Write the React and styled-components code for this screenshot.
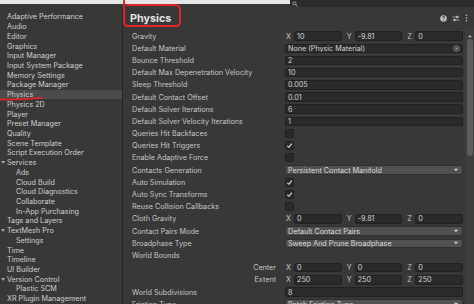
import React from "react";
import styled, { createGlobalStyle } from "styled-components";

const GlobalStyle = createGlobalStyle`
  html, body {
    margin: 0;
    padding: 0;
    background: #383838;
  }
  body {
    font-family: Inter, "Liberation Sans", sans-serif;
  }
`;

const SIDE_ITEMS = [
  { name: "Adaptive Performance" },
  { name: "Audio" },
  { name: "Editor" },
  { name: "Graphics" },
  { name: "Input Manager" },
  { name: "Input System Package" },
  { name: "Memory Settings" },
  { name: "Package Manager" },
  { name: "Physics", selected: true },
  { name: "Physics 2D" },
  { name: "Player" },
  { name: "Preset Manager" },
  { name: "Quality" },
  { name: "Scene Template" },
  { name: "Script Execution Order" },
  { name: "Services", open: true },
  { name: "Ads", depth: 1 },
  { name: "Cloud Build", depth: 1 },
  { name: "Cloud Diagnostics", depth: 1 },
  { name: "Collaborate", depth: 1 },
  { name: "In-App Purchasing", depth: 1 },
  { name: "Tags and Layers" },
  { name: "TextMesh Pro", open: true },
  { name: "Settings", depth: 1 },
  { name: "Time" },
  { name: "Timeline" },
  { name: "UI Builder" },
  { name: "Version Control", open: true },
  { name: "Plastic SCM", depth: 1 },
  { name: "XR Plugin Management" },
];

const PROPS = [
  { label: "Gravity", type: "vec", values: ["10", "-9.81", "0"] },
  { label: "Default Material", type: "object", value: "None (Physic Material)" },
  { label: "Bounce Threshold", type: "field", value: "2" },
  { label: "Default Max Depenetration Velocity", type: "field", value: "10" },
  { label: "Sleep Threshold", type: "field", value: "0.005" },
  { label: "Default Contact Offset", type: "field", value: "0.01" },
  { label: "Default Solver Iterations", type: "field", value: "6" },
  { label: "Default Solver Velocity Iterations", type: "field", value: "1" },
  { label: "Queries Hit Backfaces", type: "check", checked: false },
  { label: "Queries Hit Triggers", type: "check", checked: true },
  { label: "Enable Adaptive Force", type: "check", checked: false },
  { label: "Contacts Generation", type: "select", value: "Persistent Contact Manifold" },
  { label: "Auto Simulation", type: "check", checked: true },
  { label: "Auto Sync Transforms", type: "check", checked: true },
  { label: "Reuse Collision Callbacks", type: "check", checked: false },
  { label: "Cloth Gravity", type: "vec", values: ["0", "-9.81", "0"] },
  { label: "Contact Pairs Mode", type: "select", value: "Default Contact Pairs" },
  { label: "Broadphase Type", type: "select", value: "Sweep And Prune Broadphase" },
  { label: "World Bounds", type: "none" },
  { label: "Center", type: "vec", values: ["0", "0", "0"], sub: true },
  { label: "Extent", type: "vec", values: ["250", "250", "250"], sub: true },
  { label: "World Subdivisions", type: "field", value: "8" },
  { label: "Friction Type", type: "select", value: "Patch Friction Type" },
];

const App = () => {
  return (
    <>
      <GlobalStyle />
      <Window>
        <TopBar>
          <LightStrip />
          <SearchBox>
            <svg width="6" height="6" viewBox="0 0 6 6">
              <circle cx="2.4" cy="2.4" r="1.6" fill="none" stroke="#bdbdbd" strokeWidth="0.8" />
              <path d="M3.6 3.6 L5.4 5.4" stroke="#bdbdbd" strokeWidth="0.9" />
            </svg>
          </SearchBox>
        </TopBar>
        <Body>
          <Sidebar>
            {SIDE_ITEMS.map((item) => (
              <SideItem key={item.name} $depth={item.depth || 0} $selected={item.selected} $hasArrow={item.open}>
                {item.open && <Fold>▼</Fold>}
                {item.name}
              </SideItem>
            ))}
          </Sidebar>
          <Main>
            <Header>
              <Title>Physics</Title>
              <HeaderIcons>
                <svg width="7" height="7" viewBox="0 0 7 7">
                  <circle cx="3.5" cy="3.5" r="3.2" fill="#c8c8c8" />
                  <text x="3.5" y="5.5" fontSize="5.5" fontWeight="700" textAnchor="middle" fill="#383838" fontFamily="Inter, sans-serif">?</text>
                </svg>
                <svg width="8" height="7" viewBox="0 0 8 7">
                  <path d="M0.5 2 H7.5 M0.5 5 H7.5" stroke="#b8b8b8" strokeWidth="0.8" />
                  <rect x="4.3" y="0.8" width="1.6" height="2.4" fill="#c8c8c8" />
                  <rect x="1.8" y="3.8" width="1.6" height="2.4" fill="#c8c8c8" />
                </svg>
                <svg width="3" height="8" viewBox="0 0 3 8">
                  <circle cx="1.5" cy="1.2" r="0.8" fill="#c8c8c8" />
                  <circle cx="1.5" cy="4" r="0.8" fill="#c8c8c8" />
                  <circle cx="1.5" cy="6.8" r="0.8" fill="#c8c8c8" />
                </svg>
              </HeaderIcons>
            </Header>
            <Content>
              <Rows>
                {PROPS.map((p) => (
                  <Row key={p.label}>
                    <Label $sub={p.sub}>{p.label}</Label>
                    <Value>
                      <PropValue prop={p} />
                    </Value>
                  </Row>
                ))}
              </Rows>
              <Scrollbar>
                <svg width="6" height="4" viewBox="0 0 6 4">
                  <path d="M1 3.2 L3 1 L5 3.2 Z" fill="#bdbdbd" />
                </svg>
                <Thumb />
              </Scrollbar>
            </Content>
          </Main>
        </Body>
        <Marks width="474" height="304" viewBox="0 0 474 304">
          <path
            d="M124 0 L124 22 Q124 26 128 26 L176 26 Q180 26 180 22 L180 10 Q180 5 175 5 L127 5"
            fill="none"
            stroke="#e1232a"
            strokeWidth="2"
            strokeLinecap="round"
          />
          <path d="M0 99.5 Q20 99.8 42 97.8" fill="none" stroke="#e1232a" strokeWidth="1.8" strokeLinecap="round" />
        </Marks>
      </Window>
    </>
  );
};

const PropValue = ({ prop }) => {
  if (prop.type === "vec") {
    return (
      <VecWrap>
        {["X", "Y", "Z"].map((axis, i) => (
          <VecGroup key={axis}>
            <Axis>{axis}</Axis>
            <Field>{prop.values[i]}</Field>
          </VecGroup>
        ))}
      </VecWrap>
    );
  }
  if (prop.type === "object") {
    return (
      <Field>
        <span>{prop.value}</span>
        <svg width="7" height="7" viewBox="0 0 7 7">
          <circle cx="3.5" cy="3.5" r="2.8" fill="none" stroke="#9a9a9a" strokeWidth="0.8" />
          <circle cx="3.5" cy="3.5" r="1.2" fill="#9a9a9a" />
        </svg>
      </Field>
    );
  }
  if (prop.type === "field") return <Field>{prop.value}</Field>;
  if (prop.type === "check") {
    return (
      <Check>
        {prop.checked && (
          <svg width="7" height="7" viewBox="0 0 7 7">
            <path d="M1.3 3.8 L2.9 5.3 L5.8 1.6" fill="none" stroke="#e6e6e6" strokeWidth="1.1" />
          </svg>
        )}
      </Check>
    );
  }
  if (prop.type === "select") {
    return (
      <Select>
        <span>{prop.value}</span>
        <svg width="6" height="4" viewBox="0 0 6 4">
          <path d="M0.8 0.8 L5.2 0.8 L3 3.3 Z" fill="#d0d0d0" />
        </svg>
      </Select>
    );
  }
  return null;
};

const Window = styled.div`
  position: relative;
  width: 474px;
  height: 304px;
  overflow: hidden;
  display: flex;
  flex-direction: column;
  background: #383838;
`;

const TopBar = styled.div`
  display: flex;
  height: 8px;
  flex-shrink: 0;
`;

const LightStrip = styled.div`
  flex: 1;
  height: 4px;
  background: #e6e6e6;
`;

const SearchBox = styled.div`
  width: 184px;
  height: 7px;
  background: #2b2b2b;
  border-bottom-left-radius: 2px;
  display: flex;
  align-items: center;
  padding-left: 2px;
  box-sizing: border-box;
`;

const Body = styled.div`
  flex: 1;
  display: flex;
  min-height: 0;
`;

const Sidebar = styled.div`
  width: 122px;
  flex-shrink: 0;
  border-right: 1px solid #242424;
  padding-top: 4px;
  background: #383838;
`;

const SideItem = styled.div`
  display: flex;
  align-items: center;
  height: 9.72px;
  padding-left: ${(p) => (p.$depth ? 16 : p.$hasArrow ? 1 : 7)}px;
  font-size: 7.2px;
  color: #cfcfcf;
  white-space: nowrap;
  background: ${(p) => (p.$selected ? "#4b4b4b" : "transparent")};
`;

const Fold = styled.span`
  width: 6px;
  font-size: 4px;
  color: #a8a8a8;
`;

const Main = styled.div`
  flex: 1;
  display: flex;
  flex-direction: column;
  min-width: 0;
`;

const Header = styled.div`
  height: 20px;
  flex-shrink: 0;
  display: flex;
  align-items: center;
  justify-content: space-between;
  padding: 0 6px 0 7px;
`;

const Title = styled.div`
  font-size: 10.8px;
  font-weight: 700;
  color: #e2e2e2;
`;

const HeaderIcons = styled.div`
  display: flex;
  align-items: center;
  gap: 5px;
`;

const Content = styled.div`
  flex: 1;
  display: flex;
  min-height: 0;
`;

const Rows = styled.div`
  flex: 1;
  padding-top: 2px;
`;

const Row = styled.div`
  display: flex;
  align-items: center;
  height: 12.2px;
  padding-left: 9px;
`;

const Label = styled.div`
  flex: 0 0 153px;
  font-size: 7.2px;
  color: #c6c6c6;
  white-space: nowrap;
  text-align: ${(p) => (p.$sub ? "right" : "left")};
  padding-right: ${(p) => (p.$sub ? 9 : 0)}px;
  box-sizing: border-box;
`;

const Value = styled.div`
  width: 178px;
  display: flex;
  align-items: center;
`;

const VecWrap = styled.div`
  flex: 1;
  display: flex;
  gap: 4px;
`;

const VecGroup = styled.div`
  flex: 1;
  display: flex;
  align-items: center;
`;

const Axis = styled.span`
  width: 8px;
  padding-left: 1px;
  font-size: 7.2px;
  color: #c6c6c6;
`;

const Field = styled.div`
  flex: 1;
  height: 9.5px;
  box-sizing: border-box;
  display: flex;
  align-items: center;
  justify-content: space-between;
  padding: 0 2px 0 2px;
  background: #2a2a2a;
  border: 1px solid #212121;
  border-radius: 2px;
  font-size: 7.2px;
  color: #d4d4d4;
  white-space: nowrap;
  overflow: hidden;
`;

const Check = styled.div`
  width: 9px;
  height: 9px;
  box-sizing: border-box;
  background: #2a2a2a;
  border: 1px solid #202020;
  border-radius: 2px;
  display: flex;
  align-items: center;
  justify-content: center;
`;

const Select = styled.div`
  flex: 1;
  height: 9.5px;
  box-sizing: border-box;
  display: flex;
  align-items: center;
  justify-content: space-between;
  padding: 0 3px 0 2px;
  background: #515151;
  border: 1px solid #303030;
  border-radius: 2px;
  font-size: 7.2px;
  color: #dadada;
  white-space: nowrap;
`;

const Scrollbar = styled.div`
  width: 9px;
  margin-left: 1px;
  display: flex;
  flex-direction: column;
  align-items: center;
  padding-top: 6px;
  background: #3d3d3d;
`;

const Thumb = styled.div`
  width: 6px;
  height: 117px;
  margin-top: 1px;
  border-radius: 3px;
  background: #5c5c5c;
`;

const Marks = styled.svg`
  position: absolute;
  left: 0;
  top: 0;
  pointer-events: none;
`;

export default App;
